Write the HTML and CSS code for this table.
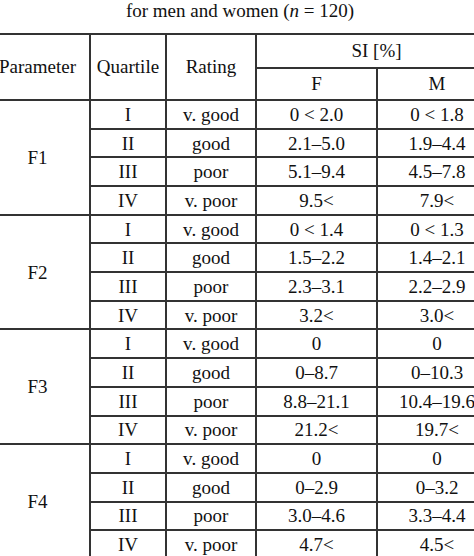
FILE: index.html
```html
<!DOCTYPE html>
<html lang="en">
<head>
<meta charset="utf-8">
<title>SI quartiles</title>
<link rel="stylesheet" href="styles.css">
</head>
<body>
<div class="viewport">
  <div class="sheet">
    <p class="caption">for men and women (<i>n</i> = 120)</p>
    <table class="grid">
      <colgroup>
        <col class="c-param"><col class="c-quart"><col class="c-rate"><col class="c-val"><col class="c-val2">
      </colgroup>
      <thead>
        <tr class="h1">
          <th rowspan="2">Parameter</th>
          <th rowspan="2">Quartile</th>
          <th rowspan="2">Rating</th>
          <th colspan="2">SI [%]</th>
        </tr>
        <tr class="h2">
          <th>F</th>
          <th>M</th>
        </tr>
      </thead>
      <tbody>
        <tr><td rowspan="4">F1</td><td>I</td><td>v. good</td><td>0 &lt; 2.0</td><td>0 &lt; 1.8</td></tr>
        <tr><td>II</td><td>good</td><td>2.1–5.0</td><td>1.9–4.4</td></tr>
        <tr><td>III</td><td>poor</td><td>5.1–9.4</td><td>4.5–7.8</td></tr>
        <tr><td>IV</td><td>v. poor</td><td>9.5&lt;</td><td>7.9&lt;</td></tr>
        <tr><td rowspan="4">F2</td><td>I</td><td>v. good</td><td>0 &lt; 1.4</td><td>0 &lt; 1.3</td></tr>
        <tr><td>II</td><td>good</td><td>1.5–2.2</td><td>1.4–2.1</td></tr>
        <tr><td>III</td><td>poor</td><td>2.3–3.1</td><td>2.2–2.9</td></tr>
        <tr><td>IV</td><td>v. poor</td><td>3.2&lt;</td><td>3.0&lt;</td></tr>
        <tr><td rowspan="4">F3</td><td>I</td><td>v. good</td><td>0</td><td>0</td></tr>
        <tr><td>II</td><td>good</td><td>0–8.7</td><td>0–10.3</td></tr>
        <tr><td>III</td><td>poor</td><td>8.8–21.1</td><td>10.4–19.6</td></tr>
        <tr><td>IV</td><td>v. poor</td><td>21.2&lt;</td><td>19.7&lt;</td></tr>
        <tr><td rowspan="4">F4</td><td>I</td><td>v. good</td><td>0</td><td>0</td></tr>
        <tr><td>II</td><td>good</td><td>0–2.9</td><td>0–3.2</td></tr>
        <tr><td>III</td><td>poor</td><td>3.0–4.6</td><td>3.3–4.4</td></tr>
        <tr><td>IV</td><td>v. poor</td><td>4.7&lt;</td><td>4.5&lt;</td></tr>
      </tbody>
    </table>
  </div>
</div>
</body>
</html>
```

FILE: styles.css
```css
html, body {
  margin: 0;
  padding: 0;
  background: #ffffff;
  overflow: hidden;
}

.viewport {
  width: 474px;
  height: 556px;
  overflow: hidden;
}

.sheet {
  width: 512px;
  margin-left: -16px;
  font-family: "Liberation Serif", "Times New Roman", serif;
  font-size: 19px;
  color: #111111;
}

.caption {
  margin: 0;
  height: 33px;
  line-height: 22px;
  text-align: center;
}

.grid {
  width: 512px;
  border-collapse: collapse;
  table-layout: fixed;
}

.c-param { width: 105px; }
.c-quart { width: 76px; }
.c-rate  { width: 90px; }
.c-val   { width: 121px; }
.c-val2  { width: 120px; }

.grid th,
.grid td {
  border: 2px solid #333333;
  padding: 0;
  text-align: center;
  vertical-align: middle;
  font-weight: normal;
  line-height: 20px;
  white-space: nowrap;
}

.grid .h1 { height: 33.7px; }
.grid .h2 { height: 32.3px; }
.grid tbody tr { height: 28.7px; }
.grid tbody td { padding-top: 1px; }
```
